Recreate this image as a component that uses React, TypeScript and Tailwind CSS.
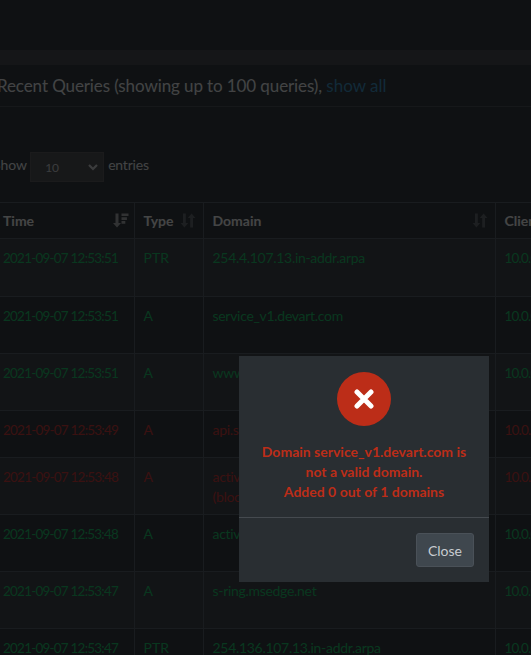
const rows = [
  { time: "2021-09-07 12:53:51", type: "PTR", domain: "254.4.107.13.in-addr.arpa", ok: true, h: "h-[58px]" },
  { time: "2021-09-07 12:53:51", type: "A", domain: "service_v1.devart.com", ok: true, h: "h-[57px]" },
  { time: "2021-09-07 12:53:51", type: "A", domain: "www.msftconnecttest.com", ok: true, h: "h-[57px]" },
  { time: "2021-09-07 12:53:49", type: "A", domain: "api.segment.io", ok: false, h: "h-[47px]" },
  { time: "2021-09-07 12:53:48", type: "A", domain: "activity.windows.com", sub: "(blocked)", ok: false, h: "h-[57px]" },
  { time: "2021-09-07 12:53:48", type: "A", domain: "activity.windows.com", ok: true, h: "h-[57px]" },
  { time: "2021-09-07 12:53:47", type: "A", domain: "s-ring.msedge.net", ok: true, h: "h-[57px]" },
  { time: "2021-09-07 12:53:47", type: "PTR", domain: "254.136.107.13.in-addr.arpa", ok: true, h: "h-[57px]" },
];

function SortIcon({ active }: { active?: boolean }) {
  if (active) {
    return (
      <svg width="16" height="17" viewBox="0 0 16 16" className="text-[#a4a8ac]" fill="currentColor">
        <path d="M2.5 1h3v9.5H8L4 15 0 10.5h2.5z" />
        <path d="M8.5 1h7v2.6h-7zM8.5 4.8h5.4v2.6H8.5zM8.5 8.6h3.8v2.6H8.5z" />
      </svg>
    );
  }
  return (
    <svg width="16" height="17" viewBox="0 0 16 16" className="text-[#62686e]" fill="currentColor">
      <path d="M3 1h2.8v9.5h2.4L4.4 15 .6 10.5H3z" />
      <path d="M10.2 15h2.8V5.5h2.4L11.6 1 7.8 5.5h2.4z" />
    </svg>
  );
}

export default function App() {
  return (
    <div className="relative h-[655px] w-[531px] overflow-hidden bg-[#343a40] font-['Lato',sans-serif] text-[14px] text-white">
      {/* Page behind the dialog */}
      <div className="h-[50px]" />
      <div className="h-[15px] bg-[#484c50]" />
      <div className="flex h-[42px] items-center border-b border-[#4b5259] -ml-[9px] pl-[6px] text-[17px] text-[#dfe2e5]">
        <span className="tracking-[-0.1px]">Recent Queries (showing up to 100 queries),&nbsp;</span>
        <a className="text-[#3c8dbc]">show all</a>
      </div>
      <div className="flex h-[95px] items-start pt-[45px] text-[#dfe2e5] -ml-[9px]">
        <span className="mr-[3px] mt-[2px] ml-[2px]">Show</span>
        <div className="flex h-[30px] w-[74px] items-center justify-between border border-[#5a5d60] bg-[#4f5154] pl-[14px] pr-[4px] text-[12px] text-[#c5c9cd]">
          <span className="pt-[2px]">10</span>
          <svg width="12" height="12" viewBox="0 0 12 12" fill="none" stroke="currentColor" strokeWidth="2.2">
            <path d="M2 4l4 4 4-4" />
          </svg>
        </div>
        <span className="ml-[4px] mt-[2px] tracking-[-0.2px]">entries</span>
      </div>
      <table className="-ml-[9px] w-[700px] table-fixed border-collapse">
        <colgroup>
          <col className="w-[143px]" />
          <col className="w-[69px]" />
          <col className="w-[292px]" />
          <col className="w-[196px]" />
        </colgroup>
        <thead>
          <tr className="h-[36px] border-y border-[#56606a] font-bold text-[#e4e6e8]">
            <th className="border-r border-[#56606a] pl-[12px] pr-[5px] text-left">
              <div className="flex items-center justify-between">Time<SortIcon active /></div>
            </th>
            <th className="border-r border-[#56606a] pl-[9px] pr-[7px] text-left">
              <div className="flex items-center justify-between">Type<SortIcon /></div>
            </th>
            <th className="border-r border-[#56606a] pl-[9px] pr-[7px] text-left">
              <div className="flex items-center justify-between">Domain<SortIcon /></div>
            </th>
            <th className="pl-[9px] text-left">Client</th>
          </tr>
        </thead>
        <tbody>
          {rows.map((r, i) => (
            <tr
              key={i}
              className={`${r.h} border-b border-[#56606a] align-top ${i % 2 === 0 ? "bg-white/5" : ""} ${
                r.ok ? "text-[#1fb868]" : "text-[#c23a3a]"
              }`}
            >
              <td className="border-r border-[#56606a] pl-[12px] pt-[9px] text-[13.5px] leading-[20px] tracking-[-0.78px] whitespace-nowrap">{r.time}</td>
              <td className="border-r border-[#56606a] pl-[9px] pt-[9px] leading-[20px]">{r.type}</td>
              <td className="border-r border-[#56606a] pl-[9px] pt-[9px] leading-[20px] tracking-[-0.3px]">
                {r.domain}
                {r.sub && <div>{r.sub}</div>}
              </td>
              <td className="pl-[9px] pt-[9px] text-[13.5px] leading-[20px] tracking-[-0.78px]">10.0.0.13</td>
            </tr>
          ))}
        </tbody>
      </table>

      {/* Backdrop */}
      <div className="absolute inset-0 bg-black/70" />

      {/* Error dialog */}
      <div className="absolute left-[239px] top-[356px] h-[226px] w-[250px] bg-[#292e32]">
        <div className="flex h-[162px] flex-col items-center border-b border-[#454a4f] pt-[16px]">
          <div className="flex h-[54px] w-[54px] items-center justify-center rounded-full bg-[#bc2d18]">
            <svg width="20" height="20" viewBox="0 0 20 20" fill="none" stroke="white" strokeWidth="5" strokeLinecap="round">
              <path d="M3 3l14 14M17 3L3 17" />
            </svg>
          </div>
          <p className="mt-[16px] text-center text-[14px] font-bold leading-[20px] text-[#bc2d18]">
            Domain service_v1.devart.com is
            <br />
            not a valid domain.
            <br />
            Added 0 out of 1 domains
          </p>
        </div>
        <div className="flex justify-end pr-[15px] pt-[15px]">
          <button className="h-[34px] w-[58px] rounded-[3px] border border-[#4a5158] bg-[#3f474e] text-[14px] text-[#c8ccd0]">
            Close
          </button>
        </div>
      </div>
    </div>
  );
}
